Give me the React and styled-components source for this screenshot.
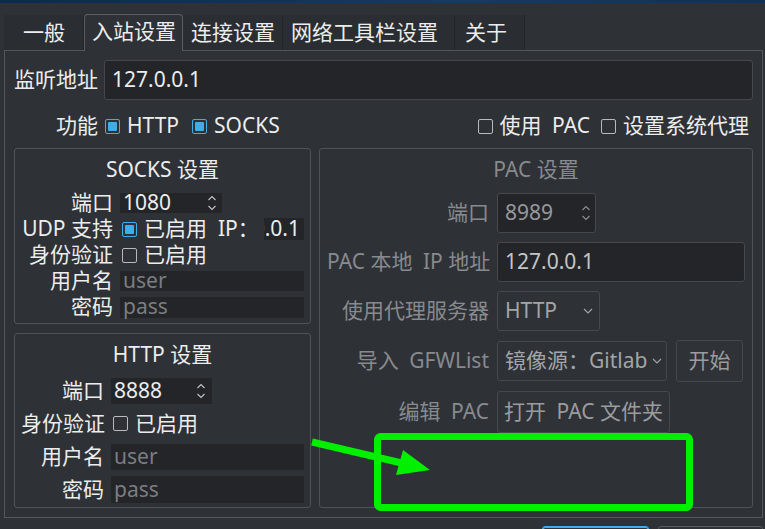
import styled, { createGlobalStyle, css } from 'styled-components';

const GlobalStyle = createGlobalStyle`
  html, body {
    margin: 0;
    padding: 0;
    background: #2e3136;
    overflow: hidden;
  }
  body {
    font-family: "Noto Sans", "Noto Sans CJK SC", sans-serif;
    font-size: 21px;
    line-height: 1.3;
    color: #eceded;
  }
  * { box-sizing: border-box; }
`;

const Page = styled.div`
  position: relative;
  width: 765px;
  height: 529px;
  overflow: hidden;
`;

const TitleStrip = styled.div`
  height: 3px;
  background: linear-gradient(90deg, #0c2a4d, #133b68 60%, #0f3258);
`;

const Dialog = styled.div`
  padding: 11px 2px 0 4px;
`;

const TabBar = styled.div`
  display: flex;
  align-items: flex-start;
  height: 37px;
  margin-bottom: -1px;
  position: relative;
  z-index: 1;
`;

const Tab = styled.div`
  width: ${p => p.$w}px;
  padding-left: ${p => p.$pl}px;
  display: flex;
  align-items: center;
  white-space: nowrap;
  color: #eceded;
  ${p => p.$active ? css`
    height: 37px;
    padding-bottom: 2px;
    background: #2e3136;
    border: 1px solid #5a5e63;
    border-bottom: none;
    border-radius: 4px 4px 0 0;
  ` : css`
    height: 35px;
    margin-top: 1px;
    background: #2a2d31;
    border-right: 1px solid #222427;
  `}
`;

const Panel = styled.div`
  border: 1px solid #53575c;
  padding: 9px;
`;

const TopForm = styled.div`
  display: grid;
  grid-template-columns: 84px 1fr;
  grid-template-rows: 40px 26px;
  column-gap: 6px;
  row-gap: 13px;
  align-items: center;
`;

const Label = styled.div`
  text-align: right;
  white-space: nowrap;
  color: ${p => (p.$dim ? '#878a8e' : '#eceded')};
`;

const OptionRow = styled.div`
  display: flex;
  justify-content: space-between;
  align-items: center;
  padding: 0 4px 0 1px;
`;

const Options = styled.div`
  display: flex;
  align-items: center;
  gap: ${p => p.$gap || 13}px;
`;

const CheckLabel = styled.label`
  display: inline-flex;
  align-items: center;
  gap: 7px;
  white-space: nowrap;
`;

const Box = styled.span`
  width: 15px;
  height: 15px;
  flex-shrink: 0;
  border-radius: 2px;
  padding: 2px;
  border: 1px solid ${p => (p.$checked ? '#3daee9' : '#b8babd')};
  &::after {
    content: '';
    display: block;
    width: 100%;
    height: 100%;
    border-radius: 1px;
    background: ${p => (p.$checked ? '#3daee9' : 'transparent')};
  }
`;

const Check = ({ checked, children }) => (
  <CheckLabel>
    <Box $checked={checked} />
    {children}
  </CheckLabel>
);

const Edit = styled.div`
  display: flex;
  align-items: center;
  justify-content: space-between;
  height: ${p => p.$h}px;
  width: ${p => (p.$w ? `${p.$w}px` : 'auto')};
  flex: ${p => (p.$w ? '0 0 auto' : '1 1 auto')};
  padding: 0 ${p => p.$pr ?? 4}px 0 ${p => p.$pl ?? 3}px;
  background: #232528;
  color: ${p => p.$color || '#eceded'};
  white-space: nowrap;
  ${p => p.$framed && css`
    border: 1px solid #45494e;
    border-radius: 3px;
  `}
`;

/* line edit scrolled to its end: the start of the address is hidden */
const ScrolledEdit = styled(Edit)`
  justify-content: flex-end;
  overflow: hidden;
  min-width: 0;
`;

const Placeholder = styled.span`
  color: #7b7e82;
`;

const Combo = styled.div`
  display: flex;
  align-items: center;
  justify-content: space-between;
  height: 40px;
  width: ${p => p.$w}px;
  padding: 0 ${p => p.$pr || 6}px 0 7px;
  border: 1px solid #45494e;
  border-radius: 3px;
  color: #a3a5a8;
  white-space: nowrap;
`;

const PushButton = styled.div`
  display: flex;
  align-items: center;
  justify-content: center;
  height: 42px;
  width: ${p => p.$w}px;
  border: 1px solid #45494e;
  border-radius: 3px;
  background: #2f3237;
  color: #9a9c9f;
  white-space: nowrap;
`;

const Columns = styled.div`
  display: grid;
  grid-template-columns: 297px 1fr;
  column-gap: 8px;
  margin-top: 9px;
`;

const Stack = styled.div`
  display: flex;
  flex-direction: column;
  gap: 9px;
`;

const Group = styled.div`
  border: 1px solid #4f5358;
  border-radius: 3px;
  padding-top: 6px;
`;

const GroupTitle = styled.div`
  height: 28px;
  line-height: 28px;
  text-align: center;
  margin-bottom: ${p => p.$mb}px;
  color: ${p => (p.$dim ? '#878a8e' : '#eceded')};
`;

const Form = styled.div`
  display: grid;
  grid-template-columns: ${p => p.$cols};
  grid-auto-rows: ${p => p.$row};
  column-gap: ${p => p.$cg}px;
  row-gap: ${p => p.$rg || 0}px;
  padding: ${p => p.$pad};
  align-items: center;
`;

const Inline = styled.div`
  display: flex;
  align-items: center;
  gap: ${p => p.$gap}px;
  padding-left: ${p => p.$pl || 0}px;
  min-width: 0;
`;

const ButtonRow = styled.div`
  display: flex;
  justify-content: flex-end;
  gap: 9px;
  margin-top: 8px;
`;

// only the top edge of the dialog buttons is inside the shot
const DialogButton = styled.div`
  width: ${p => p.$w}px;
  height: 40px;
  border-radius: 3px;
  border: 1px solid ${p => (p.$default ? '#3daee9' : '#5a5e63')};
  box-shadow: ${p => (p.$default ? 'inset 0 0 0 1px #3daee9' : 'none')};
`;

const Overlay = styled.svg`
  position: absolute;
  left: 0;
  top: 0;
  pointer-events: none;
`;

const SpinArrows = ({ color = '#c3c5c7' }) => (
  <svg width="10" height="18" viewBox="0 0 10 18" fill="none" stroke={color} strokeWidth="1.1">
    <polyline points="1.5,6 5,2.5 8.5,6" />
    <polyline points="1.5,12 5,15.5 8.5,12" />
  </svg>
);

const Chevron = ({ color = '#a3a5a8' }) => (
  <svg width="10" height="6" viewBox="0 0 10 6" fill="none" stroke={color} strokeWidth="1.1">
    <polyline points="1,1 5,5 9,1" />
  </svg>
);

const tabs = [
  { label: '一般', w: 80, pl: 19 },
  { label: '入站设置', w: 99, pl: 7, active: true },
  { label: '连接设置', w: 100, pl: 8 },
  { label: '网络工具栏设置', w: 172, pl: 8 },
  { label: '关于', w: 70, pl: 10 },
];

// the space after a CJK word is wider in the reference (taken from the CJK font)
const SP = '\u2002';

const App = () => (
  <Page>
    <GlobalStyle />
    <TitleStrip />
    <Dialog>
      <TabBar>
        {tabs.map(t => (
          <Tab key={t.label} $w={t.w} $pl={t.pl} $active={t.active}>{t.label}</Tab>
        ))}
      </TabBar>
      <Panel>
        <TopForm>
          <Label>监听地址</Label>
          <Edit $h={40} $pl={7} $framed>127.0.0.1</Edit>
          <Label>功能</Label>
          <OptionRow>
            <Options>
              <Check checked>HTTP</Check>
              <Check checked>SOCKS</Check>
            </Options>
            <Options $gap={11}>
              <Check>{`使用${SP}PAC`}</Check>
              <Check>设置系统代理</Check>
            </Options>
          </OptionRow>
        </TopForm>

        <Columns>
          <Stack>
            <Group>
              <GroupTitle $mb={7}>SOCKS 设置</GroupTitle>
              <Form $cols="91px 1fr" $row="26px" $cg={7} $pad="0 6px 3px 7px">
                <Label>端口</Label>
                <Inline $gap={0}>
                  <Edit $h={20} $w={102} $pr={5}>1080<SpinArrows /></Edit>
                </Inline>
                <Label>UDP 支持</Label>
                <Inline $gap={11} $pl={2}>
                  <Check checked>已启用</Check>
                  <span>IP：</span>
                  <ScrolledEdit $h={22} $pr={4} style={{ marginLeft: -6 }}>127.0.0.1</ScrolledEdit>
                </Inline>
                <Label>身份验证</Label>
                <Inline $gap={0} $pl={2}>
                  <Check>已启用</Check>
                </Inline>
                <Label>用户名</Label>
                <Edit $h={20}><Placeholder>user</Placeholder></Edit>
                <Label>密码</Label>
                <Edit $h={21}><Placeholder>pass</Placeholder></Edit>
              </Form>
            </Group>

            <Group>
              <GroupTitle $mb={6}>HTTP 设置</GroupTitle>
              <Form $cols="83px 1fr" $row="33px" $cg={7} $pad="0 6px 1px 6px">
                <Label>端口</Label>
                <Inline $gap={0}>
                  <Edit $h={26} $w={101} $pr={6}>8888<SpinArrows /></Edit>
                </Inline>
                <Label>身份验证</Label>
                <Inline $gap={0} $pl={2}>
                  <Check>已启用</Check>
                </Inline>
                <Label>用户名</Label>
                <Edit $h={26}><Placeholder>user</Placeholder></Edit>
                <Label>密码</Label>
                <Edit $h={27}><Placeholder>pass</Placeholder></Edit>
              </Form>
            </Group>
          </Stack>

          <Group>
            <GroupTitle $mb={10} $dim>PAC 设置</GroupTitle>
            <Form $cols="162px 1fr" $row="auto" $cg={8} $rg={9} $pad="0 7px 0 7px">
              <Label $dim>端口</Label>
              <Inline $gap={0}>
                <Edit $h={40} $w={99} $pl={7} $pr={4} $framed $color="#97999c">
                  8989<SpinArrows color="#8e9093" />
                </Edit>
              </Inline>
              <Label $dim>{`PAC 本地${SP}IP 地址`}</Label>
              <Edit $h={40} $pl={7} $framed $color="#c4c5c7">127.0.0.1</Edit>
              <Label $dim>使用代理服务器</Label>
              <Inline $gap={0}>
                <Combo $w={103}>HTTP<Chevron /></Combo>
              </Inline>
              <Label $dim>{`导入${SP}GFWList`}</Label>
              <Inline $gap={9}>
                <Combo $w={170} $pr={4}>镜像源：Gitlab<Chevron /></Combo>
                <PushButton $w={67}>开始</PushButton>
              </Inline>
              <Label $dim>{`编辑${SP}PAC`}</Label>
              <Inline $gap={0}>
                <PushButton $w={173}>{`打开${SP}PAC 文件夹`}</PushButton>
              </Inline>
            </Form>
          </Group>
        </Columns>
      </Panel>
      <ButtonRow>
        <DialogButton $w={107} $default />
        <DialogButton $w={105} />
      </ButtonRow>
    </Dialog>

    <Overlay width="765" height="529" viewBox="0 0 765 529">
      <rect x="377.5" y="436.5" width="312" height="71" rx="3" fill="none" stroke="#00f000" strokeWidth="7" />
      <line x1="312" y1="442" x2="406" y2="464" stroke="#00f000" strokeWidth="7" />
      <polygon points="403,450 396,475 430,470" fill="#00f000" />
    </Overlay>
  </Page>
);

export default App;
